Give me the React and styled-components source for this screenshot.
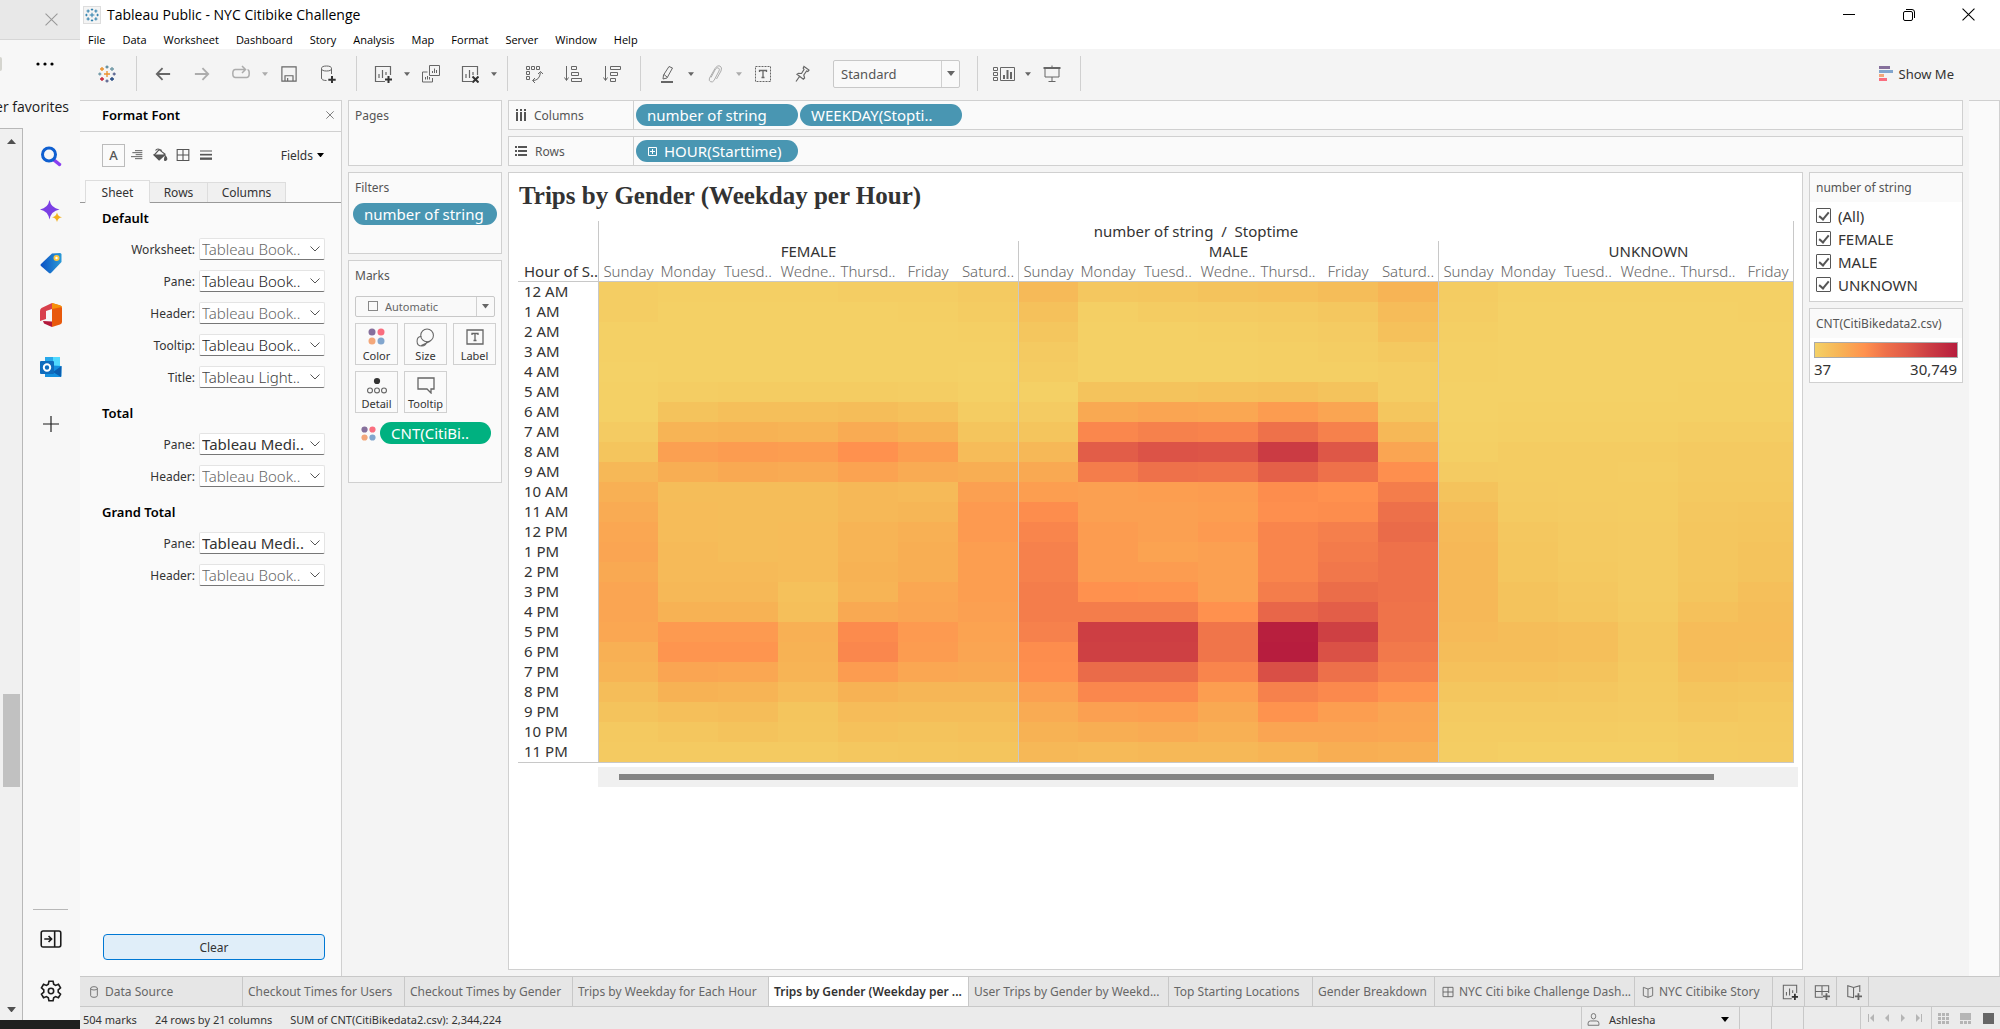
// Import dependencies
import React, { useState } from 'react';
import styled, { createGlobalStyle } from 'styled-components';

//----------------  Page styles  ----------------//
const GlobalStyle = createGlobalStyle`
    * {
        box-sizing: border-box;
    }
    body {
        margin: 0;
        background: #f4f4f4;
        color: #333;
        font-family: 'Noto Sans', 'Open Sans', sans-serif;
        font-size: 12px;
    }
    button, select, input {
        font: inherit;
        color: inherit;
        margin: 0;
    }
    svg {
        display: block;
        flex: none;
    }
`;

const Page = styled.div`
    display: flex;
    height: 100vh;
    min-height: 900px;
    overflow: hidden;
`;
const AppWindow = styled.div`
    display: flex;
    flex-direction: column;
    flex: 1;
    min-width: 0;
`;
const PlainButton = styled.button`
    display: flex;
    align-items: center;
    justify-content: center;
    padding: 0;
    border: 0;
    background: none;
`;

//----------------  Browser edge  ----------------//
const BrowserEdge = styled.aside`
    display: flex;
    flex-direction: column;
    flex: none;
    width: 80px;
    background: #f7f7f7;
    color: #1b1b1b;
`;
const BrowserTab = styled.div`
    display: flex;
    justify-content: flex-end;
    align-items: center;
    height: 40px;
    padding-right: 22px;
    background: #e8e8e8;
    border-bottom: 1px solid #d6d6d6;
`;
const BrowserMenu = styled.div`
    display: flex;
    align-items: center;
    justify-content: space-between;
    height: 48px;
    padding-right: 26px;
`;
const Avatar = styled.span`
    width: 2px;
    height: 14px;
    border-radius: 0 4px 4px 0;
    background: #d5d5cf;
`;
const Favorites = styled.div`
    display: flex;
    justify-content: flex-end;
    align-items: center;
    height: 36px;
    margin-bottom: 4px;
    padding-right: 11px;
    white-space: nowrap;
    font-family: 'Open Sans', sans-serif;
    font-size: 14px;
`;
const EdgeBody = styled.div`
    display: flex;
    flex: 1;
    min-height: 0;
`;
const PageScroll = styled.div`
    display: flex;
    flex-direction: column;
    align-items: center;
    width: 23px;
    padding: 10px 2px 8px 3px;
    background: #f0f0f0;
    border-top: 1px solid #b8b8b8;
    border-right: 1px solid #b8b8b8;
`;
const PageThumb = styled.div`
    width: 17px;
    height: 93px;
    margin: 550px 0 auto;
    background: #c1c1c1;
`;
const EdgeIcons = styled.div`
    display: flex;
    flex-direction: column;
    align-items: center;
    flex: 1;
    padding: 18px 2px 17px 0;
`;
const EdgeButton = styled(PlainButton)`
    width: 32px;
    height: 22px;
    margin-bottom: ${(props) => props.$gap || 30}px;
`;
const EdgeRule = styled.div`
    width: 35px;
    height: 1px;
    margin: auto 0 18px;
    background: #b8b8b8;
`;
const TaskbarBit = styled.div`
    height: 9px;
    background: #1f1f1f;
`;

//----------------  Title, menu and toolbar  ----------------//
const TitleBar = styled.header`
    display: flex;
    align-items: center;
    height: 29px;
    padding: 0 25px 0 3px;
    background: #fff;
`;
const AppTitle = styled.h1`
    flex: 1;
    margin: 0 0 0 6px;
    font-family: 'Open Sans', sans-serif;
    font-size: 14px;
    font-weight: 400;
    color: #000;
`;
const LogoTile = styled.span`
    padding: 1px;
    background: #f4f4f4;
    border: 1px solid #ddd;
`;
const WindowButtons = styled.div`
    display: flex;
    gap: 46px;
`;
const MenuBar = styled.nav`
    display: flex;
    gap: 17px;
    height: 20px;
    padding: 2px 0 0 8px;
    background: #fff;
    line-height: 18px;
    font-family: 'Open Sans', sans-serif;
`;
const MenuItem = styled(PlainButton)`
    font-size: 11px;
    color: #000;
`;
const Toolbar = styled.div`
    display: flex;
    align-items: center;
    height: 51px;
    padding-bottom: 2px;
`;
const ToolGroup = styled.div`
    display: flex;
    align-items: center;
    height: 35px;
    padding: 0 9px 0 6px;
    border-right: 1px solid #d0d0d0;
    color: #666;
`;
const LogoGroup = styled(ToolGroup)`
    padding: 0 20px 0 18px;
`;
const WideToolGroup = styled(ToolGroup)`
    padding-right: 17px;
`;
const ToolButton = styled(PlainButton)`
    width: 39px;
    height: 34px;
    opacity: ${(props) => (props.$faint ? 0.5 : 1)};
`;
const CaretButton = styled(PlainButton)`
    width: 9px;
    height: 34px;
    opacity: ${(props) => (props.$faint ? 0.5 : 1)};
`;
const ShowMe = styled(PlainButton)`
    gap: 6px;
    margin-left: auto;
    margin-right: 46px;
    font-size: 13px;
`;

//----------------  Select boxes  ----------------//
const SelectWrap = styled.div`
    display: grid;
    grid-template-columns: 1fr ${(props) => props.$arrow || 18}px;
    align-items: center;
    width: ${(props) => props.$width || 126}px;
    height: ${(props) => props.$height || 22}px;
    background: #fff;
    border: 1px solid #e4e4e4;
    border-bottom-color: #777;
    border-radius: 2px;

    svg {
        grid-area: 1 / 2;
        justify-self: center;
        pointer-events: none;
    }
`;
const BoxSelectWrap = styled(SelectWrap)`
    background: #f9f9f9;
    border: 1px solid #c8c8c8;
`;
const ScaleSelectWrap = styled(BoxSelectWrap)`
    margin-left: 12px;
`;
const SelectInput = styled.select`
    grid-area: 1 / 1 / 2 / 3;
    width: 100%;
    height: 100%;
    padding: 0 0 0 ${(props) => props.$indent || 2}px;
    appearance: none;
    background: none;
    border: 0;
    font-size: ${(props) => props.$size || 15}px;
    font-weight: ${(props) => props.$weight || 300};
    color: ${(props) => props.$color || '#333'};
`;
const ArrowCell = styled.span`
    grid-area: 1 / 2;
    display: flex;
    align-items: center;
    justify-content: center;
    height: 100%;
    border-left: 1px solid #d0d0d0;
    pointer-events: none;
`;

//----------------  Workspace  ----------------//
const Workspace = styled.div`
    display: flex;
    flex: 1;
    min-height: 0;
`;
const FormatPane = styled.section`
    display: flex;
    flex-direction: column;
    width: 262px;
    background: #fafafa;
    border-top: 1px solid #d0d0d0;
    border-right: 1px solid #d0d0d0;
`;
const PaneHeader = styled.div`
    display: flex;
    align-items: center;
    justify-content: space-between;
    height: 31px;
    padding: 0 7px 2px 22px;
    border-bottom: 1px solid #d0d0d0;
`;
const PaneTitle = styled.h2`
    margin: 0;
    font-size: 13px;
    font-weight: 600;
    color: #000;
`;
const FormatTools = styled.div`
    display: flex;
    align-items: center;
    height: 22px;
    margin: 12px 17px 15px 22px;
    color: #555;
`;
const FormatTool = styled(PlainButton)`
    width: 23px;
    height: 23px;
    border: 1px solid ${(props) => (props.$on ? '#bbb' : 'transparent')};
    font-size: 13px;
    font-weight: 500;
`;
const FieldsButton = styled(PlainButton)`
    gap: 4px;
    margin-left: auto;
    color: #333;
`;
const FormatTabs = styled.div`
    display: flex;
    align-items: flex-end;
    height: 22px;
    padding-left: 5px;
    border-bottom: 1px solid #999;
`;
const FormatTab = styled.button`
    width: ${(props) => props.$width}px;
    height: ${(props) => (props.$on ? 23 : 20)}px;
    margin-bottom: ${(props) => (props.$on ? -1 : 0)}px;
    padding: 0;
    border: 1px solid #ddd;
    border-left-width: ${(props) => (props.$on ? 1 : 0)}px;
    border-bottom: 0;
    background: ${(props) => (props.$on ? '#fafafa' : '#f0f0f0')};
`;
const GroupTitle = styled.h3`
    height: 20px;
    margin: 5px 0 10px 22px;
    line-height: 20px;
    font-size: 13px;
    font-weight: 600;
    color: #000;
`;
const FormatRow = styled.div`
    display: flex;
    justify-content: flex-end;
    align-items: center;
    gap: 4px;
    height: 22px;
    margin: 0 16px 10px 0;
`;
const ClearButton = styled.button`
    height: 26px;
    margin: auto 16px 16px 23px;
    padding: 0;
    background: #e0eef9;
    border: 1px solid #0078d4;
    border-radius: 4px;
`;

const ShelfColumn = styled.div`
    display: flex;
    flex-direction: column;
    gap: 6px;
    width: 154px;
    margin-left: 6px;
`;
const Card = styled.section`
    height: ${(props) => props.$height}px;
    padding: 0 4px;
    background: #fafafa;
    border: 1px solid #d0d0d0;
`;
const CardTitle = styled.h2`
    height: 30px;
    margin: 0 0 0 2px;
    line-height: 30px;
    font-size: 12px;
    font-weight: 400;
    color: #555;
`;
const Pill = styled.button`
    display: flex;
    align-items: center;
    gap: 6px;
    width: ${(props) => props.$width}px;
    height: 22px;
    padding: 0 0 0 11px;
    border: 0;
    border-radius: 11px;
    background: ${(props) => (props.$green ? '#00b180' : '#4996b2')};
    color: #fff;
    font-size: 15px;
    white-space: nowrap;
`;
const MarkButtons = styled.div`
    display: grid;
    grid-template-columns: repeat(3, 43px);
    grid-auto-rows: 42px;
    gap: 6px;
    margin: 6px 0 9px 2px;
`;
const MarkButton = styled(PlainButton)`
    flex-direction: column;
    justify-content: space-between;
    padding: 4px 0 1px;
    border: 1px solid #d0d0d0;
    font-size: 11px;
`;
const MarkRow = styled.div`
    display: flex;
    align-items: center;
    gap: 4px;
    padding-left: 8px;
`;

const Center = styled.div`
    display: flex;
    flex-direction: column;
    gap: 6px;
    flex: 1;
    min-width: 0;
    margin: 0 6px;
`;
const Shelf = styled.div`
    display: flex;
    align-items: center;
    gap: 2px;
    height: 30px;
    background: #fafafa;
    border: 1px solid #d0d0d0;
`;
const ShelfName = styled.div`
    display: flex;
    align-items: center;
    gap: 8px;
    width: 125px;
    height: 28px;
    padding-left: 6px;
    border-right: 1px solid #d0d0d0;
    color: #555;
`;
const Content = styled.div`
    display: flex;
    gap: 6px;
    flex: 1;
    min-height: 0;
    margin-bottom: 6px;
`;
const View = styled.main`
    flex: 1;
    min-width: 0;
    padding: 8px 4px 0 9px;
    background: #fff;
    border: 1px solid #d0d0d0;
`;
const ViewTitle = styled.h2`
    height: 30px;
    margin: 0 0 10px 1px;
    line-height: 30px;
    font-family: 'Liberation Serif', serif;
    font-size: 25px;
    font-weight: 700;
    color: #333;
`;
const LegendColumn = styled.div`
    display: flex;
    flex-direction: column;
    gap: 6px;
    width: 154px;
`;
const LegendCard = styled.section`
    height: ${(props) => props.$height}px;
    background: #fff;
    border: 1px solid #d0d0d0;
`;
const LegendTitle = styled.h2`
    height: 29px;
    margin: 0 0 ${(props) => props.$gap}px;
    padding-left: 6px;
    background: #fafafa;
    line-height: 30px;
    font-size: 12px;
    font-weight: 400;
    color: #555;
`;
const CheckRow = styled.label`
    display: flex;
    align-items: center;
    gap: 7px;
    height: 23px;
    padding-left: 6px;
    font-size: 15px;
`;
const CheckBox = styled.input`
    display: grid;
    place-items: center;
    width: 15px;
    height: 15px;
    appearance: none;
    border: 1px solid #555;
    border-radius: 1px;
    background: #fff;

    &:checked::after {
        content: '';
        width: 4px;
        height: 8px;
        margin-bottom: 2px;
        border: solid #555;
        border-width: 0 2px 2px 0;
        transform: rotate(40deg);
    }
`;
const Ramp = styled.div`
    height: 16px;
    margin: 0 4px;
    border: 1px solid #aaa;
    background: linear-gradient(to right, #f4d166 0%, #f7b255 18%, #ff914e 35%, #ee704a 50%, #e05a48 65%, #cc3e43 80%, #b71d3e 100%);
`;
const RampEnds = styled.div`
    display: flex;
    justify-content: space-between;
    padding: 0 5px 0 4px;
    line-height: 23px;
    font-size: 15px;
`;
const ShowMeStrip = styled.div`
    width: 31px;
    background: #fafafa;
    border: solid #d0d0d0;
    border-width: 1px 1px 0 0;
`;

//----------------  Heat map  ----------------//
const ChartFrame = styled.div`
    margin-right: 4px;
    overflow: hidden;
    border-right: 1px solid #c8c8c8;
    font-size: 15px;
`;
const FieldRow = styled.div`
    height: 20px;
    margin-left: 80px;
    border-left: 1px solid #c8c8c8;
    line-height: 20px;
    text-align: center;
    white-space: pre;
`;
const HeatTable = styled.table`
    width: 1340px;
    table-layout: fixed;
    border-collapse: separate;
    border-spacing: 0;
    border-bottom: 1px solid #c8c8c8;

    th, td {
        height: 20px;
        padding: 0 0 2px;
        line-height: 18px;
        white-space: nowrap;
    }
    thead th {
        padding: 0;
        line-height: 20px;
    }
`;
const GroupHead = styled.th`
    border-left: 1px solid #c8c8c8;
    font-weight: 400;
`;
const DayHead = styled.th`
    border-bottom: 1px solid #c8c8c8;
    border-left: ${(props) => (props.$first ? '1px solid #c8c8c8' : '0')};
    font-weight: 300;
    color: #666;
`;
const HourHead = styled.th`
    text-align: left;
    text-indent: 6px;
    font-weight: 400;
    color: #333;
    border-bottom: ${(props) => (props.$line ? '1px solid #c8c8c8' : '0')};
`;
const HeatCell = styled.td`
    border-left: ${(props) => (props.$first ? '1px solid #c8c8c8' : '0')};
`;
const ChartScroll = styled.div`
    height: 20px;
    margin: 4px 0 0 80px;
    padding: 7px 84px 7px 21px;
    background: #f0f0f0;
`;
const ChartThumb = styled.div`
    height: 6px;
    background: #848484;
`;

//----------------  Sheet tabs and status bar  ----------------//
const SheetTabs = styled.div`
    display: flex;
    height: 31px;
    background: #e6e6e6;
    border-top: 1px solid #c8c8c8;
    border-bottom: 1px solid #c8c8c8;
`;
const SheetTab = styled.button`
    display: flex;
    align-items: center;
    gap: 5px;
    width: ${(props) => props.$width}px;
    padding: 0 0 0 ${(props) => props.$indent || 5}px;
    border: 0;
    border-right: 1px solid #c8c8c8;
    background: ${(props) => (props.$on ? '#fff' : 'none')};
    font-size: 12px;
    font-weight: ${(props) => (props.$on ? 600 : 400)};
    color: ${(props) => (props.$on ? '#333' : '#666')};
    white-space: nowrap;
`;
const StatusBar = styled.footer`
    display: flex;
    height: 22px;
    padding-left: 3px;
    background: #ebebeb;
    line-height: 25px;
`;
const StatusText = styled.span`
    margin-right: 18px;
    font-size: 11px;
`;
const StatusCell = styled.div`
    display: flex;
    align-items: center;
    justify-content: space-around;
    width: ${(props) => props.$width}px;
    border-left: 1px solid #c8c8c8;
`;
const UserButton = styled(PlainButton)`
    gap: 9px;
    width: 158px;
    margin-left: auto;
    padding: 2px 10px 0 5px;
    border-left: 1px solid #c8c8c8;
    font-size: 11px;

    svg:last-child {
        margin-left: auto;
    }
`;

//----------------  Icons  ----------------//
const Icon = ({ size = 18, children, color = 'currentColor', width = 1 }) => (
    <svg width={size} height={size} viewBox='0 0 18 18' fill='none' stroke={color} strokeWidth={width}>
        {children}
    </svg>
);
const Caret = ({ w = 6, color = '#666' }) => (
    <svg width={w} height={w / 2 + 1} viewBox='0 0 8 5'><path d='M0 0h8L4 5z' fill={color} /></svg>
);
const Chevron = () => (
    <svg width='10' height='6' viewBox='0 0 10 6' fill='none' stroke='#555'><path d='M.5.5 5 5 9.5.5' /></svg>
);
const CloseX = ({ size = 13, color = '#000' }) => (
    <svg width={size} height={size} viewBox='0 0 12 12' stroke={color}><path d='M.5.5l11 11M11.5.5l-11 11' /></svg>
);
// Nine crosses of the app logo: x, y, half size, colour
const crosses = [
    [9, 9, 3, '#eb912c'], [4, 4, 2, '#eb912c'], [14, 4, 2, '#7099a6'], [4, 14, 2, '#c72035'], [14, 14, 2, '#1f447e'],
    [9, 2, 1.5, '#59879b'], [9, 16, 1.5, '#5b6591'], [1.8, 9, 1.5, '#7099a6'], [16.2, 9, 1.5, '#5b6591'],
];
const Logo = ({ size, mono }) => (
    <svg width={size} height={size} viewBox='0 0 18 18' strokeWidth='1.3'>
        {crosses.map(([x, y, r, c]) => (
            <path key={`${x}-${y}`} stroke={mono ? '#2f80ad' : c} d={`M${x - r} ${y}h${r * 2}M${x} ${y - r}v${r * 2}`} />
        ))}
    </svg>
);
const Dots = ({ size = 17 }) => (
    <svg width={size} height={size} viewBox='0 0 17 17'>
        <circle cx='4' cy='4' r='3.5' fill='#86709c' />
        <circle cx='13' cy='4' r='3.5' fill='#fa6e7f' />
        <circle cx='4' cy='13' r='3.5' fill='#f3a77a' />
        <circle cx='13' cy='13' r='3.5' fill='#82a6ce' />
    </svg>
);
const sheet = <path strokeWidth='1.200' d='M11 16.5H1.500V1.500h15V10M5 13V9M8.500 13V5M12 10V7' />;
const icons = {
    back: <path strokeWidth='2' d='M17 9H2M8.500 2.500 2 9l6.500 6.500' />,
    forward: <path strokeWidth='2' d='M1 9h15M9.500 2.500 16 9l-6.500 6.500' />,
    redo: <path strokeWidth='1.500' d='M5 4.500H3.500Q.8 4.500 .8 8.500t2.700 4h11q2.700 0 2.700-4T15.500 5M5 4.500h8M10 1l3.500 3.500L10 8' />,
    save: <path strokeWidth='1.300' d='M1 1h16v16H1zM4.500 17v-6h9v6M7.500 13.500v3.500' />,
    addData: <><path d='M7.500 15.500C4 15.500 2.500 14.500 2.500 13V3.500M12.500 3.500V9' /><ellipse cx='7.500' cy='3.500' rx='5' ry='2.500' /><path stroke='#333' strokeWidth='2' d='M13 11v7.500M9.300 14.700h7.400' /></>,
    newSheet: <>{sheet}<path stroke='#333' strokeWidth='2' d='M14.500 11v7M11 14.500h7' /></>,
    duplicate: <path d='M7.500.5h10v10h-10zM5.500 7H.5v10h10v-4M10.500 8V6M12.500 8V3.500M14.500 8V5M3.500 14.500V12M5.500 14.500V11M7.500 14.500V12' />,
    clear: <>{sheet}<path stroke='#333' strokeWidth='2' d='m11.500 11.500 6 6M17.500 11.500l-6 6' /></>,
    swap: <path d='M1.500 1.500h3v3h-3zM6.500 1.500h3v3h-3zM11.500 1.500h3v3h-3zM1.500 6.500h3v3h-3zM1.500 11.500h3v3h-3zM8 15.500q6.500 0 7.500-8M13 9l2.600-2.500L18 9M10 13l-2.500 2.500L10 18' />,
    sortAsc: <path d='M2.500 1v14M.5 12.500l2 3 2-3M7.500 1.500h5v3h-5zM7.500 7.500h7v3h-7zM7.500 13.500h10v3h-10z' />,
    sortDesc: <path d='M2.500 1v14M.5 12.500l2 3 2-3M7.500 1.500h10v3h-10zM7.500 7.500h7v3h-7zM7.500 13.500h5v3h-5z' />,
    highlight: <><path d='M11 1.500 14.500 3 9 13l-4 1 .5-4zM6 9.500 9 12' /><path strokeWidth='2' d='M3 17h12' /></>,
    clip: <path d='M5 12.500 9.500 4q1.500-2 3-1t.5 3l-5 9.500q-1.500 2.200-3.500 1.200t-1-3.600L9 3.500Q11.500-.5 14 1t1 5l-4.500 8' />,
    text: <><path strokeDasharray='2 1' d='M1.500 1.500h15v15h-15z' /><path strokeWidth='1.300' d='M5.500 7V5.500h7V7M9 5.500v7M7.500 12.500h3' /></>,
    pin: <path strokeWidth='1.200' d='M11 1.500 16 5l-1.200 1.500-1.200-.5-2.800 4 .8 3-1.300 1.200L4 9.300l1.500-1 3 .2L11 4.500l-.8-1.300zM6.500 11.500 3 16.500' />,
    present: <><path strokeWidth='2' d='M.5 3h17' /><path d='M2 3.500v8.500h14V3.500M9 12v5M5.500 16.500h7M9 .5v2' /></>,
    align: <path strokeWidth='1.400' d='M6 2.500h11M2 5.500h15M7 8.500h10M0 11.500h17M6 14.500h11' />,
    fill: <><path d='M8 3 2.500 9l5.500 5 6.500-6z' /><path fill='currentColor' d='M2.500 9h11.500L8 14.500zM15 10q3 4 .5 5t-.5-5z' /><path d='M4 4q2-3.500 7 0' /></>,
    grid: <path strokeWidth='1.400' d='M1.500 2h15v14h-15zM9 2v14M1.500 9h15' />,
    lines: <><path strokeWidth='3.500' d='M0 14.500h18' /><path strokeWidth='2.500' d='M0 8.500h18' /><path strokeWidth='1.500' d='M0 3h18' /></>,
    size: <><circle cx='10.500' cy='7' r='6' /><path d='M5 8q-4 0-4 4.500T5.500 17q4 0 4.500-4M5 16.500 13.500 12.500' /></>,
    label: <path strokeWidth='1.300' d='M1 2h16v14H1zM6 7V5.500h6V7M9 5.500v7M7.500 12.500h3' />,
    detail: <><circle cx='9' cy='4.500' r='2.800' fill='currentColor' stroke='none' /><circle cx='2.700' cy='13' r='2.200' /><circle cx='9' cy='13' r='2.200' /><circle cx='15.300' cy='13' r='2.200' /></>,
    tooltip: <path strokeWidth='1.300' d='M1 2h16v11h-3v4l-4-4H1z' />,
    data: <><path strokeWidth='1.300' d='M4 3.500v11q0 2.500 5 2.500t5-2.500v-11' /><ellipse strokeWidth='1.300' cx='9' cy='3.500' rx='5' ry='2.500' /></>,
    story: <path strokeWidth='1.300' d='M9 4.500 2 2v12.500L9 17l7-2.500V2zM9 4.500V17' />,
    addDash: <><path strokeWidth='1.200' d='M10 15H1.500V2h15v8M9 2v11M1.500 8.500h15' /><path strokeWidth='2' d='M14 10.500v7.500M10 14h8' /></>,
    addStory: <><path strokeWidth='1.200' d='M9 15.500 2 14V2l6.500 2L15.500 2v7M8.500 4v11' /><path strokeWidth='2' d='M14 10.500v7.500M10 14h8' /></>,
    person: <path strokeWidth='1.200' d='M9 .8a3 3 0 0 1 3 3v1.400a3 3 0 0 1-6 0V3.800a3 3 0 0 1 3-3zM1.500 17v-3q0-3 3.500-3h8q3.500 0 3.500 3v3z' />,
    gear: <><circle cx='9' cy='9' r='2.200' /><path strokeWidth='1.300' d='M7.300 1h3.400l.5 2.500 1.500.9 2.400-.9 1.700 2.900-1.900 1.700v1.800l1.900 1.700-1.700 2.900-2.400-.9-1.500.9-.5 2.500H7.300l-.5-2.500-1.500-.9-2.400.9-1.700-2.900 1.900-1.700V8.100L1.200 6.400l1.700-2.900 2.400.9 1.500-.9z' /></>,
    panel: <path strokeWidth='1.300' d='M2.500 2.500h13q1.500 0 1.500 1.500v10q0 1.500-1.500 1.500h-13Q1 15.500 1 14V4q0-1.500 1.500-1.500zM12 2.500v13M3.500 9h6M7 6.500 9.500 9 7 11.500' />,
};

const Magnifier = () => (
    <svg width='22' height='22' viewBox='0 0 22 22' fill='none'>
        <path d='m14 14 5.500 4.500' stroke='#8a3ff0' strokeWidth='3.500' strokeLinecap='round' />
        <circle cx='9' cy='8.500' r='6.500' stroke='#0f5fd0' strokeWidth='3' />
    </svg>
);
const Sparkle = () => (
    <svg width='22' height='22' viewBox='0 0 22 22'>
        <path d='M9.500 0q1.500 8 10 9.500-8.500 1.500-10 10Q8 11 0 9.500 8 8 9.500 0z' fill='#7b3fe4' />
        <path d='M17 12.500q.8 4 5 4.800-4.200.8-5 4.700-.8-4-5-4.700 4.200-.8 5-4.800z' fill='#f2b01e' />
    </svg>
);
const Tag = () => (
    <svg width='22' height='22' viewBox='0 0 22 22'>
        <defs><linearGradient id='tag'><stop stopColor='#0b50c4' /><stop offset='1' stopColor='#2b9ad6' /></linearGradient></defs>
        <path d='M12 1.500 20 1q1.500 0 1.500 1.500V10L11 21q-1 .8-2 0L1 14q-1-1 0-2z' fill='url(#tag)' />
        <circle cx='16.500' cy='6' r='3' fill='#ffc83d' /><circle cx='16.500' cy='6' r='1.200' fill='#fff' />
    </svg>
);
const Office = () => (
    <svg width='22' height='24' viewBox='0 0 22 24'>
        <path d='M12 0 1.500 5Q0 6 0 8v10l6-2V8l6-2z' fill='#d8404c' />
        <path d='M12 0v24l8-2.500q2-.8 2-2.500V5q0-1.700-2-2.500z' fill='#e8590c' />
        <path d='M12 0v6l10-2q-.3-1.200-2-1.800z' fill='#f79009' />
        <path d='m3 18 9 .5V24L4 20.500z' fill='#b2183a' />
    </svg>
);
const Outlook = () => (
    <svg width='22' height='22' viewBox='0 0 22 22'>
        <path d='M5 1h15v12H5z' fill='#50d9ff' /><path d='M5 1h8v10H5z' fill='#28a8ea' />
        <path d='M5 9l16.500 1v10q0 1-1 1H5z' fill='#1490df' /><path d='M21.500 10 13 16l8 5z' fill='#0a5eb0' />
        <rect y='5' width='14' height='13' rx='1' fill='#0f6cbd' /><circle cx='7' cy='11.500' r='3.200' fill='none' stroke='#fff' strokeWidth='2' />
    </svg>
);

//----------------  Data  ----------------//
const menus = ['File', 'Data', 'Worksheet', 'Dashboard', 'Story', 'Analysis', 'Map', 'Format', 'Server', 'Window', 'Help'];
const days = ['Sunday', 'Monday', 'Tuesd..', 'Wedne..', 'Thursd..', 'Friday', 'Saturd..'];
const genders = ['FEMALE', 'MALE', 'UNKNOWN'];
// Trips per hour as a percent of the busiest cell, Sunday to Saturday for each gender
const hours = [
    ['12 AM', 3, 2, 2, 2, 3, 3, 6, 16, 8, 9, 11, 12, 14, 19, 4, 1, 1, 1, 1, 1],
    ['1 AM', 3, 1, 1, 1, 1, 2, 4, 12, 2, 4, 5, 6, 8, 15, 3, 0, 0, 0, 0, 1],
    ['2 AM', 1, 1, 1, 1, 1, 1, 2, 9, 1, 1, 2, 3, 5, 12, 2, 0, 0, 0, 0, 0],
    ['3 AM', 1, 1, 1, 1, 1, 1, 1, 6, 1, 1, 1, 2, 3, 7, 1, 0, 0, 0, 0, 0],
    ['4 AM', 0, 1, 1, 1, 1, 1, 0, 4, 1, 1, 1, 2, 2, 3, 1, 0, 0, 0, 0, 0],
    ['5 AM', 1, 3, 4, 4, 4, 3, 1, 1, 11, 11, 12, 13, 11, 3, 0, 0, 0, 0, 1, 1],
    ['6 AM', 1, 11, 13, 13, 14, 12, 4, 5, 24, 26, 25, 30, 26, 9, 0, 1, 1, 1, 1, 1],
    ['7 AM', 5, 19, 20, 19, 23, 20, 10, 10, 40, 43, 42, 51, 43, 17, 1, 2, 2, 2, 3, 3],
    ['8 AM', 10, 28, 30, 29, 35, 29, 15, 17, 64, 69, 68, 82, 67, 26, 2, 4, 4, 4, 6, 6],
    ['9 AM', 17, 22, 24, 23, 27, 23, 22, 24, 45, 51, 50, 62, 51, 36, 5, 4, 4, 3, 6, 6],
    ['10 AM', 21, 14, 14, 14, 17, 16, 28, 29, 28, 29, 30, 37, 35, 45, 11, 5, 4, 4, 7, 7],
    ['11 AM', 23, 15, 14, 14, 17, 18, 31, 37, 28, 28, 29, 36, 37, 52, 14, 6, 5, 4, 8, 9],
    ['12 PM', 25, 15, 14, 15, 19, 21, 31, 41, 30, 28, 31, 41, 44, 55, 16, 8, 6, 5, 9, 10],
    ['1 PM', 26, 16, 14, 15, 19, 22, 29, 43, 30, 27, 28, 41, 46, 51, 17, 9, 6, 5, 9, 11],
    ['2 PM', 24, 16, 16, 15, 20, 22, 29, 43, 30, 30, 28, 41, 48, 51, 17, 9, 7, 5, 9, 11],
    ['3 PM', 26, 17, 17, 12, 19, 25, 29, 45, 35, 34, 28, 45, 54, 51, 17, 11, 8, 5, 10, 13],
    ['4 PM', 26, 20, 20, 13, 24, 26, 28, 45, 45, 45, 35, 58, 63, 50, 17, 11, 9, 6, 12, 14],
    ['5 PM', 25, 31, 31, 21, 38, 31, 27, 43, 80, 80, 49, 99, 79, 50, 16, 14, 13, 8, 15, 15],
    ['6 PM', 21, 33, 33, 20, 40, 30, 26, 37, 79, 79, 49, 100, 70, 47, 14, 14, 13, 8, 15, 14],
    ['7 PM', 19, 26, 25, 19, 30, 25, 24, 36, 55, 55, 41, 71, 52, 43, 12, 12, 11, 7, 13, 12],
    ['8 PM', 14, 20, 19, 15, 20, 18, 18, 28, 40, 40, 29, 43, 39, 33, 9, 9, 8, 6, 10, 9],
    ['9 PM', 11, 13, 14, 10, 15, 14, 14, 23, 28, 29, 24, 34, 29, 26, 6, 6, 6, 5, 8, 7],
    ['10 PM', 7, 9, 11, 9, 12, 11, 12, 20, 22, 23, 21, 26, 26, 25, 4, 4, 4, 3, 5, 6],
    ['11 PM', 6, 6, 6, 6, 8, 9, 10, 17, 16, 17, 17, 19, 22, 21, 3, 2, 2, 2, 4, 5],
];
const stops = [
    [0, 244, 209, 102], [10, 244, 197, 93], [20, 247, 178, 84], [30, 252, 156, 80], [35, 255, 145, 78],
    [50, 239, 115, 74], [65, 225, 91, 72], [80, 205, 62, 67], [100, 183, 29, 62],
];
const heatColor = (value) => {
    const i = Math.max(1, stops.findIndex((stop) => stop[0] >= value));
    const [from, to] = [stops[i - 1], stops[i]];
    const t = (value - from[0]) / (to[0] - from[0]);
    const mix = [1, 2, 3].map((n) => Math.round(from[n] + (to[n] - from[n]) * t));
    return `rgb(${mix.join(',')})`;
};
// label, shown font, text colour, weight
const formatGroups = [
    { title: 'Default', rows: [['Worksheet', 'Tableau Book..', '#666'], ['Pane', 'Tableau Book..', '#222'], ['Header', 'Tableau Book..', '#666'], ['Tooltip', 'Tableau Book..', '#222'], ['Title', 'Tableau Light..', '#444']] },
    { title: 'Total', rows: [['Pane', 'Tableau Medi..', '#333', 400], ['Header', 'Tableau Book..', '#666']] },
    { title: 'Grand Total', rows: [['Pane', 'Tableau Medi..', '#333', 400], ['Header', 'Tableau Book..', '#666']] },
];
const sheets = [
    { name: 'Data Source', width: 163, icon: 'data', indent: 8 },
    { name: 'Checkout Times for Users', width: 162 },
    { name: 'Checkout Times by Gender', width: 168 },
    { name: 'Trips by Weekday for Each Hour', width: 196 },
    { name: 'Trips by Gender (Weekday per ...', width: 200, on: true },
    { name: 'User Trips by Gender by Weekd...', width: 200 },
    { name: 'Top Starting Locations', width: 144 },
    { name: 'Gender Breakdown', width: 122 },
    { name: 'NYC Citi bike Challenge Dash...', width: 200, icon: 'grid', indent: 7 },
    { name: 'NYC Citibike Story', width: 138, icon: 'story', indent: 7 },
];

//----------------  Parts  ----------------//
const Tool = ({ name, faint, size }) => (
    <ToolButton $faint={faint} aria-label={name}><Icon size={size}>{icons[name]}</Icon></ToolButton>
);
const ToolCaret = ({ faint }) => (
    <CaretButton $faint={faint} aria-label='More'><Caret /></CaretButton>
);

const Edge = () => (
    <BrowserEdge>
        <BrowserTab><CloseX color='#999' /></BrowserTab>
        <BrowserMenu>
            <Avatar />
            <svg width='18' height='4' viewBox='0 0 18 4'><circle cx='2' cy='2' r='1.600' /><circle cx='9' cy='2' r='1.600' /><circle cx='16' cy='2' r='1.600' /></svg>
        </BrowserMenu>
        <Favorites>er favorites</Favorites>
        <EdgeBody>
            <PageScroll>
                <svg width='9' height='5' viewBox='0 0 9 5'><path d='M0 5h9L4.500 0z' fill='#505050' /></svg>
                <PageThumb />
                <Caret w={9} color='#505050' />
            </PageScroll>
            <EdgeIcons>
                <EdgeButton $gap={32} aria-label='Search'><Magnifier /></EdgeButton>
                <EdgeButton aria-label='Discover'><Sparkle /></EdgeButton>
                <EdgeButton aria-label='Shopping'><Tag /></EdgeButton>
                <EdgeButton aria-label='Office'><Office /></EdgeButton>
                <EdgeButton $gap={35} aria-label='Outlook'><Outlook /></EdgeButton>
                <EdgeButton aria-label='Add'><Icon size={16} width={1.3}><path d='M9 0v18M0 9h18' /></Icon></EdgeButton>
                <EdgeRule />
                <EdgeButton aria-label='Panel'><Icon size={22}>{icons.panel}</Icon></EdgeButton>
                <EdgeButton $gap={1} aria-label='Settings'><Icon size={22} width={1.3}>{icons.gear}</Icon></EdgeButton>
            </EdgeIcons>
        </EdgeBody>
        <TaskbarBit />
    </BrowserEdge>
);

const TopBars = () => (
    <>
        <TitleBar>
            <LogoTile><Logo size={14} mono /></LogoTile>
            <AppTitle>Tableau Public - NYC Citibike Challenge</AppTitle>
            <WindowButtons>
                <PlainButton aria-label='Minimize'><svg width='13' height='13' stroke='#000'><path d='M0 6.500h12' /></svg></PlainButton>
                <PlainButton aria-label='Restore'><svg width='14' height='14' fill='none' stroke='#000'><rect x='1.500' y='3.500' width='9' height='9' rx='1.500' /><path d='M4 1.500h6q2.500 0 2.500 2.500v6' /></svg></PlainButton>
                <PlainButton aria-label='Close'><CloseX /></PlainButton>
            </WindowButtons>
        </TitleBar>
        <MenuBar>{menus.map((menu) => <MenuItem key={menu}>{menu}</MenuItem>)}</MenuBar>
        <Toolbar>
            <LogoGroup><Logo size={18} /></LogoGroup>
            <ToolGroup>
                <Tool name='back' size={16} /><Tool name='forward' faint size={16} /><Tool name='redo' faint /><ToolCaret faint />
                <Tool name='save' size={16} /><Tool name='addData' />
            </ToolGroup>
            <ToolGroup>
                <Tool name='newSheet' /><ToolCaret /><Tool name='duplicate' /><Tool name='clear' /><ToolCaret />
            </ToolGroup>
            <ToolGroup><Tool name='swap' /><Tool name='sortAsc' /><Tool name='sortDesc' /></ToolGroup>
            <WideToolGroup>
                <Tool name='highlight' /><ToolCaret /><Tool name='clip' faint /><ToolCaret faint /><Tool name='text' /><Tool name='pin' />
                <ScaleSelectWrap $width={127} $height={28}>
                    <SelectInput aria-label='Fit' $size={13} $weight={400} $indent={7} $color='#555'><option>Standard</option></SelectInput>
                    <ArrowCell><Caret w={8} /></ArrowCell>
                </ScaleSelectWrap>
            </WideToolGroup>
            <ToolGroup>
                <ToolButton aria-label='Show cards'>
                    <svg width='22' height='16' fill='none' stroke='#666'>
                        <path d='M.5 1.500h4v3h-4zM.5 6.500h4v3h-4zM.5 11.500h4v3h-4zM7.500 1.500h14v13h-14z' /><path strokeWidth='2' d='M11 13V9M14.500 13V4M18 13V6' />
                    </svg>
                </ToolButton>
                <ToolCaret />
                <Tool name='present' />
            </ToolGroup>
            <ShowMe>
                <svg width='14' height='15'><path d='M0 0h11v3H0z' fill='#86709c' /><path d='M0 4h14v3H0z' fill='#82a6ce' /><path d='M0 8h5v3H0z' fill='#f3a77a' /><path d='M0 12h8v3H0z' fill='#fa6e7f' /></svg>
                Show Me
            </ShowMe>
        </Toolbar>
    </>
);

const FormatFont = () => (
    <FormatPane>
        <PaneHeader>
            <PaneTitle>Format Font</PaneTitle>
            <PlainButton aria-label='Close pane'><CloseX size={8} color='#444' /></PlainButton>
        </PaneHeader>
        <FormatTools>
            <FormatTool $on>A</FormatTool>
            <FormatTool aria-label='Alignment'><Icon size={12}>{icons.align}</Icon></FormatTool>
            <FormatTool aria-label='Shading'><Icon size={16} width={1.3}>{icons.fill}</Icon></FormatTool>
            <FormatTool aria-label='Borders'><Icon size={14}>{icons.grid}</Icon></FormatTool>
            <FormatTool aria-label='Lines'><Icon size={12}>{icons.lines}</Icon></FormatTool>
            <FieldsButton>Fields <Caret w={7} color='#000' /></FieldsButton>
        </FormatTools>
        <FormatTabs>
            <FormatTab $width={65} $on>Sheet</FormatTab>
            <FormatTab $width={58}>Rows</FormatTab>
            <FormatTab $width={78}>Columns</FormatTab>
        </FormatTabs>
        {formatGroups.map((group) => (
            <React.Fragment key={group.title}>
                <GroupTitle>{group.title}</GroupTitle>
                {group.rows.map(([label, font, color, weight]) => (
                    <FormatRow key={label}>
                        <label htmlFor={`${group.title}-${label}`}>{label}:</label>
                        <SelectWrap>
                            <SelectInput id={`${group.title}-${label}`} $color={color} $weight={weight}><option>{font}</option></SelectInput>
                            <Chevron />
                        </SelectWrap>
                    </FormatRow>
                ))}
            </React.Fragment>
        ))}
        <ClearButton>Clear</ClearButton>
    </FormatPane>
);

const MarkTypeWrap = styled(BoxSelectWrap)`
    grid-template-columns: 26px 1fr 18px;
    margin: 5px 0 0 2px;

    select {
        grid-area: 1 / 1 / 2 / 4;
    }
    > svg {
        grid-area: 1 / 1;
        justify-self: end;
    }
    span {
        grid-area: 1 / 3;
    }
`;
const MarkType = () => (
    <MarkTypeWrap $width={140} $height={21}>
        <SelectInput aria-label='Mark type' $size={11} $weight={400} $indent={29} $color='#666'><option>Automatic</option></SelectInput>
        <svg width='14' height='11' fill='none' stroke='#888'><rect x='.5' y='.5' width='9' height='9' /></svg>
        <ArrowCell><Caret w={7} /></ArrowCell>
    </MarkTypeWrap>
);

const Shelves = () => (
    <ShelfColumn>
        <Card $height={66}><CardTitle>Pages</CardTitle></Card>
        <Card $height={82}>
            <CardTitle>Filters</CardTitle>
            <Pill $width={144}>number of string</Pill>
        </Card>
        <Card $height={223}>
            <CardTitle>Marks</CardTitle>
            <MarkType />
            <MarkButtons>
                <MarkButton><Dots />Color</MarkButton>
                <MarkButton><Icon size={19} color='#666'>{icons.size}</Icon>Size</MarkButton>
                <MarkButton><Icon color='#666'>{icons.label}</Icon>Label</MarkButton>
                <MarkButton><Icon size={20} color='#666'>{icons.detail}</Icon>Detail</MarkButton>
                <MarkButton><Icon color='#666'>{icons.tooltip}</Icon>Tooltip</MarkButton>
            </MarkButtons>
            <MarkRow>
                <Dots size={15} />
                <Pill $width={111} $green>CNT(CitiBi..</Pill>
            </MarkRow>
        </Card>
    </ShelfColumn>
);

const HeatMap = () => (
    <>
        <ChartFrame>
            <FieldRow>number of string  /  Stoptime</FieldRow>
            <HeatTable>
                <colgroup>
                    <col style={{ width: 80 }} />
                </colgroup>
                <thead>
                    <tr>
                        <th />
                        {genders.map((gender) => <GroupHead key={gender} colSpan={7}>{gender}</GroupHead>)}
                    </tr>
                    <tr>
                        <HourHead $line>Hour of S..</HourHead>
                        {genders.flatMap((gender, g) => days.map((day, d) => (
                            <DayHead key={gender + day} $first={d === 0}>{g === 2 && d === 6 ? '' : day}</DayHead>
                        )))}
                    </tr>
                </thead>
                <tbody>
                    {hours.map(([hour, ...cells]) => (
                        <tr key={hour}>
                            <HourHead>{hour}</HourHead>
                            {cells.map((value, i) => (
                                <HeatCell key={i} $first={i % 7 === 0} style={{ backgroundColor: heatColor(value) }} />
                            ))}
                            <HeatCell />
                        </tr>
                    ))}
                </tbody>
            </HeatTable>
        </ChartFrame>
        <ChartScroll><ChartThumb /></ChartScroll>
    </>
);

const Legends = () => {
    // Which genders are ticked in the quick filter
    const [checked, setChecked] = useState({ '(All)': true, FEMALE: true, MALE: true, UNKNOWN: true });

    const toggle = (name) => {
        setChecked({ ...checked, [name]: !checked[name] });
    };

    return (
        <LegendColumn>
            <LegendCard $height={130}>
                <LegendTitle $gap={2}>number of string</LegendTitle>
                {Object.keys(checked).map((name) => (
                    <CheckRow key={name}>
                        <CheckBox type='checkbox' checked={checked[name]} onChange={() => toggle(name)} />
                        {name}
                    </CheckRow>
                ))}
            </LegendCard>
            <LegendCard $height={75}>
                <LegendTitle $gap={4}>CNT(CitiBikedata2.csv)</LegendTitle>
                <Ramp />
                <RampEnds><span>37</span><span>30,749</span></RampEnds>
            </LegendCard>
        </LegendColumn>
    );
};

const BottomBars = () => (
    <>
        <SheetTabs>
            {sheets.map((tab) => (
                <SheetTab key={tab.name} $width={tab.width} $on={tab.on} $indent={tab.indent}>
                    {tab.icon && <Icon size={12}>{icons[tab.icon]}</Icon>}
                    {tab.name}
                </SheetTab>
            ))}
            <SheetTab $width={32} $indent={9} aria-label='New worksheet'><Icon size={16}>{icons.newSheet}</Icon></SheetTab>
            <SheetTab $width={32} $indent={9} aria-label='New dashboard'><Icon size={16}>{icons.addDash}</Icon></SheetTab>
            <SheetTab $width={32} $indent={9} aria-label='New story'><Icon size={16}>{icons.addStory}</Icon></SheetTab>
        </SheetTabs>
        <StatusBar>
            <StatusText>504 marks</StatusText>
            <StatusText>24 rows by 21 columns</StatusText>
            <StatusText>SUM of CNT(CitiBikedata2.csv): 2,344,224</StatusText>
            <UserButton>
                <Icon size={13} color='#666'>{icons.person}</Icon>
                Ashlesha
                <Caret w={8} color='#000' />
            </UserButton>
            <StatusCell $width={32} />
            <StatusCell $width={32} />
            <StatusCell $width={57} />
            <StatusCell $width={71}>
                <svg width='60' height='8' fill='#b5b5b5'>
                    <path d='M2 0h1v8H2zM8 0v8L4 4zM23 0v8l-4-4zM35 0v8l4-4zM50 0v8l4-4zM55 0h1v8h-1z' />
                </svg>
            </StatusCell>
            <StatusCell $width={69}>
                <svg width='11' height='11' fill='#b5b5b5'><path d='M0 0h3v3H0zM4 0h3v3H4zM8 0h3v3H8zM0 4h3v3H0zM4 4h3v3H4zM8 4h3v3H8zM0 8h3v3H0zM4 8h3v3H4zM8 8h3v3H8z' /></svg>
                <svg width='11' height='11' fill='#b5b5b5'><path d='M0 0h11v7H0zM0 8h3v3H0zM4 8h3v3H4zM8 8h3v3H8z' /></svg>
                <svg width='11' height='11' fill='#666'><path d='M0 0h11v11H0z' /></svg>
            </StatusCell>
        </StatusBar>
    </>
);

// Exported component
const App = () => (
    <Page>
        <GlobalStyle />
        <Edge />
        <AppWindow>
            <TopBars />
            <Workspace>
                <FormatFont />
                <Shelves />
                <Center>
                    <Shelf>
                        <ShelfName>
                            <svg width='11' height='12' fill='#555'><path d='M1 0h2v2H1zM5 0h2v2H5zM9 0h2v2H9zM1 3h2v9H1zM5 3h2v9H5zM9 3h2v9H9z' /></svg>
                            Columns
                        </ShelfName>
                        <Pill $width={162}>number of string</Pill>
                        <Pill $width={162}>WEEKDAY(Stopti..</Pill>
                    </Shelf>
                    <Shelf>
                        <ShelfName>
                            <svg width='12' height='11' fill='#555'><path d='M0 0h2v2H0zM0 4h2v2H0zM0 8h2v2H0zM3 0h9v2H3zM3 4h9v2H3zM3 8h9v2H3z' /></svg>
                            Rows
                        </ShelfName>
                        <Pill $width={162}>
                            <svg width='11' height='11' fill='none' stroke='#fff'><path d='M1.500 1.500h8v8h-8zM3 5.500h5M5.500 3v5' /></svg>
                            HOUR(Starttime)
                        </Pill>
                    </Shelf>
                    <Content>
                        <View>
                            <ViewTitle>Trips by Gender (Weekday per Hour)</ViewTitle>
                            <HeatMap />
                        </View>
                        <Legends />
                    </Content>
                </Center>
                <ShowMeStrip />
            </Workspace>
            <BottomBars />
        </AppWindow>
    </Page>
);

export default App;
